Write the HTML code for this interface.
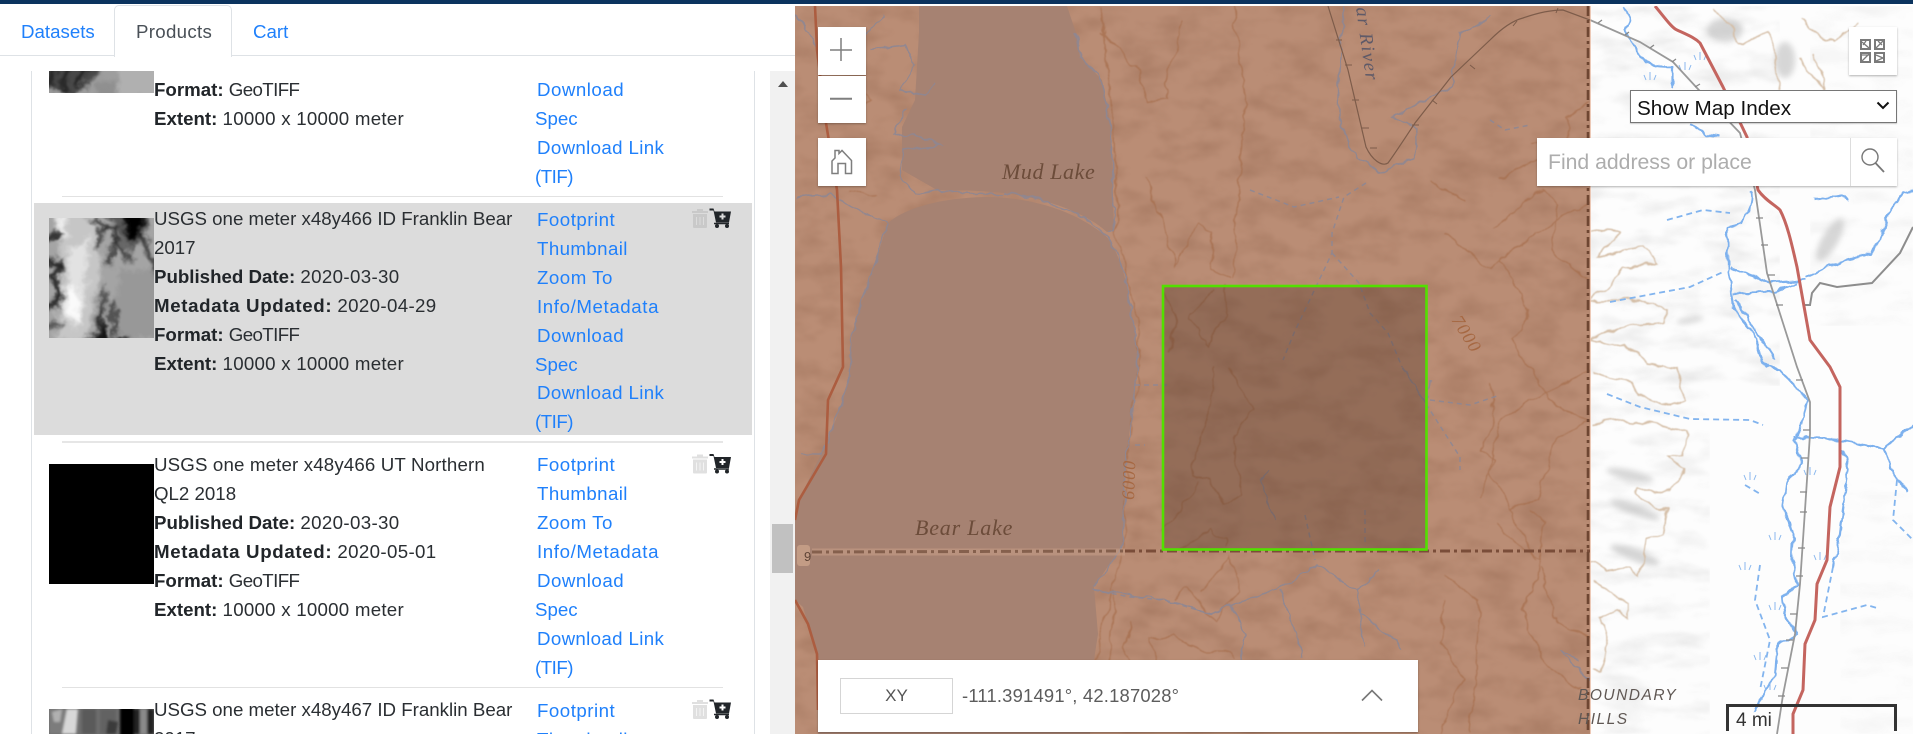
<!DOCTYPE html>
<html><head><meta charset="utf-8">
<style>
html,body{margin:0;padding:0;background:#fff}
#r{position:relative;width:1913px;height:734px;overflow:hidden;font-family:"Liberation Sans",sans-serif;font-size:18.7px;color:#2a2e32}
.a{position:absolute}
.t{position:absolute;white-space:nowrap;line-height:29px;height:29px}
.t b{color:#212529}
.l{color:#1f80fb}
.w{position:absolute;background:#fff;box-shadow:0 1px 2px rgba(0,0,0,.3)}
#list{position:absolute;left:0;top:71px;width:770px;height:663px;overflow:hidden}
.d{letter-spacing:.35px}.m{letter-spacing:.65px}.g{letter-spacing:-.6px}.v{letter-spacing:.25px}
.p1{letter-spacing:.5px}.p2{letter-spacing:.4px}.p3{letter-spacing:.5px}.p4{letter-spacing:.6px}.p5{letter-spacing:.5px}.p6{letter-spacing:.35px}.p7{letter-spacing:-.5px}
</style></head><body><div id="r">

<div class="a" style="left:0;top:0;width:1913px;height:3.5px;background:#0b335e"></div>

<!-- tabs -->
<div class="a" style="left:0;top:55px;width:795px;height:1px;background:#dee2e6"></div>
<div class="a" style="left:114px;top:5px;width:116px;height:51px;background:#fff;border:1px solid #dee2e6;border-bottom:0;border-radius:5px 5px 0 0"></div>
<div class="t l" style="left:21px;top:17px">Datasets</div>
<div class="t" style="left:136px;top:17px;color:#495057;letter-spacing:.3px">Products</div>
<div class="t l" style="left:253px;top:17px">Cart</div>

<!-- scrollbar -->
<div class="a" style="left:770px;top:71px;width:25px;height:663px;background:#f1f1f1"></div>
<div class="a" style="left:772px;top:524px;width:21px;height:49px;background:#c1c1c1"></div>
<div class="a" style="left:778px;top:81px;width:0;height:0;border-left:5.5px solid transparent;border-right:5.5px solid transparent;border-bottom:6px solid #505050"></div>

<!-- list -->
<div class="a" style="left:31px;top:71px;width:1px;height:663px;background:#dee2e6"></div>
<div class="a" style="left:754px;top:71px;width:1px;height:663px;background:#dee2e6"></div>
<div class="a" style="left:34px;top:203px;width:718px;height:232px;background:#dcdcdc"></div>
<div class="a" style="left:62px;top:196px;width:661px;height:1px;background:#e2e2e2"></div>
<div class="a" style="left:62px;top:441px;width:661px;height:2px;background:#e6e6e6"></div>
<div class="a" style="left:62px;top:687px;width:661px;height:1px;background:#e2e2e2"></div>

<svg class="a" style="left:0;top:0" width="800" height="734" viewBox="0 0 800 734">
<defs>
<filter id="b1" x="-20%" y="-20%" width="140%" height="140%"><feGaussianBlur stdDeviation="1.2"/></filter>
<filter id="tg" x="-30%" y="-30%" width="160%" height="160%" color-interpolation-filters="sRGB">
<feGaussianBlur in="SourceGraphic" stdDeviation="2.2" result="bl"/>
<feTurbulence type="fractalNoise" baseFrequency=".07" numOctaves="4" seed="7" result="n"/>
<feDisplacementMap in="bl" in2="n" scale="16" xChannelSelector="R" yChannelSelector="G"/>
<feGaussianBlur stdDeviation=".5"/>
</filter>
<clipPath id="c1"><rect x="49" y="71" width="105" height="22"/></clipPath>
<clipPath id="c2"><rect x="49" y="218" width="105" height="120"/></clipPath>
<clipPath id="c4"><rect x="49" y="709" width="105" height="25"/></clipPath>
</defs>
<!-- row 1 thumb -->
<g clip-path="url(#c1)">
<rect x="49" y="71" width="105" height="22" fill="#9e9e9e"/>
<g filter="url(#tg)">
<path d="M40 60H108L92 80L72 96L55 90L40 96Z" fill="#484848"/>
<path d="M68 65L62 92M85 65L78 90M55 70L50 90" stroke="#181818" stroke-width="4" fill="none"/>
<rect x="118" y="60" width="50" height="40" fill="#b0b0b0"/>
<rect x="96" y="82" width="22" height="15" fill="#8f8f8f"/>
</g></g>
<!-- row 2 thumb -->
<g clip-path="url(#c2)">
<rect x="49" y="218" width="105" height="120" fill="#a2a2a2"/>
<g filter="url(#tg)">
<rect x="40" y="208" width="125" height="140" fill="#a4a4a4"/>
<path d="M60 215H100V270L88 340H58Z" fill="#c6c6c6"/>
<path d="M70 250L88 238L85 295L76 330L62 315Z" fill="#e2e2e2"/>
<path d="M66 285L80 290L78 322L68 318Z" fill="#fafafa"/>
<path d="M55 215H66V240H55Z" fill="#ececec"/>
<path d="M120 270H165V340H112Z" fill="#989898"/>
<path d="M100 205L150 205L145 240L128 250L120 232Z" fill="#5a5a5a"/>
<path d="M124 212H142L140 236L128 240Z" fill="#000"/>
<path d="M92 218L118 230L108 268M104 222L96 250M140 230L158 275M118 238L130 262" stroke="#222" stroke-width="4" fill="none"/>
<path d="M40 262L60 262L54 280L60 298L44 310M46 240L60 232" stroke="#1f1f1f" stroke-width="6" fill="none"/>
<path d="M95 345L104 305L108 345Z" fill="#111"/>
<path d="M85 338H125V350H85Z" fill="#151515"/>
<path d="M104 290L100 330M112 300L115 335" stroke="#2a2a2a" stroke-width="4" fill="none"/>
<path d="M40 330L60 324" stroke="#333" stroke-width="4"/>
</g></g>
<!-- row 3 thumb -->
<rect x="49" y="464" width="105" height="120" fill="#000"/>
<!-- row 4 thumb -->
<g clip-path="url(#c4)">
<rect x="49" y="709" width="105" height="25" fill="#6e6e6e"/>
<g filter="url(#b1)">
<rect x="49" y="709" width="20" height="25" fill="#7c7c7c"/>
<path d="M52 712L62 709L60 722L54 722Z" fill="#b0b0b0"/>
<path d="M67 709L78 709L76 734L62 734Z" fill="#d8d8d8"/>
<rect x="82" y="709" width="14" height="25" fill="#5a5a5a"/>
<rect x="100" y="709" width="16" height="25" fill="#626262"/>
<path d="M108 720L118 722L116 734H106Z" fill="#3a3a3a"/>
<rect x="120" y="705" width="14" height="32" fill="#000"/>
<rect x="134" y="709" width="6" height="25" fill="#222"/>
<rect x="140" y="709" width="7" height="25" fill="#8a8a8a"/>
<rect x="147" y="709" width="7" height="25" fill="#222"/>
</g>
</g>
<!-- trash + cart icons -->
<g>
<g fill="#c9c9c9" opacity=".95">
<path d="M692 211h16v2h-16zM697 209h6v2h-6z"/>
<path d="M693 214h14v13a1 1 0 0 1-1 1h-12a1 1 0 0 1-1-1z"/>
</g>
<g stroke="#dcdcdc" stroke-width="1"><path d="M696.500 217v8M700 217v8M703.500 217v8"/></g>
<path d="M709.500 208.500h4l1 3h16.500l-2 11h-13l-2.500-12h-4z" fill="#212529"/>
<circle cx="717" cy="226" r="2" fill="#212529"/><circle cx="727" cy="226" r="2" fill="#212529"/>
<path d="M714 223.500h15" stroke="#212529" stroke-width="1.500"/>
<path d="M719.500 216.500h6M722.500 213.500v6" stroke="#dcdcdc" stroke-width="2"/>
</g>
<g transform="translate(0 245.500)">
<g fill="#e0e0e0"><path d="M692 211h16v2h-16zM697 209h6v2h-6z"/><path d="M693 214h14v13a1 1 0 0 1-1 1h-12a1 1 0 0 1-1-1z"/></g>
<g stroke="#f4f4f4"><path d="M696.500 217v8M700 217v8M703.500 217v8"/></g>
<path d="M709.500 208.500h4l1 3h16.500l-2 11h-13l-2.500-12h-4z" fill="#212529"/>
<circle cx="717" cy="226" r="2" fill="#212529"/><circle cx="727" cy="226" r="2" fill="#212529"/>
<path d="M714 223.500h15" stroke="#212529" stroke-width="1.500"/>
<path d="M719.500 216.500h6M722.500 213.500v6" stroke="#fff" stroke-width="2"/>
</g>
<g transform="translate(0 491)">
<g fill="#e0e0e0"><path d="M692 211h16v2h-16zM697 209h6v2h-6z"/><path d="M693 214h14v13a1 1 0 0 1-1 1h-12a1 1 0 0 1-1-1z"/></g>
<g stroke="#f4f4f4"><path d="M696.500 217v8M700 217v8M703.500 217v8"/></g>
<path d="M709.500 208.500h4l1 3h16.500l-2 11h-13l-2.500-12h-4z" fill="#212529"/>
<circle cx="717" cy="226" r="2" fill="#212529"/><circle cx="727" cy="226" r="2" fill="#212529"/>
<path d="M714 223.500h15" stroke="#212529" stroke-width="1.500"/>
<path d="M719.500 216.500h6M722.500 213.500v6" stroke="#fff" stroke-width="2"/>
</g>
</svg>

<!-- row 1 -->
<div id="list">
<div class="t" style="left:154px;top:3.500px"><b>Format:</b> <span class="g">GeoTIFF</span></div>
<div class="t" style="left:154px;top:32.500px"><b>Extent:</b> <span class="v">10000 x 10000 meter</span></div>
<div class="t l p5" style="left:537px;top:3.500px">Download</div>
<div class="t l" style="left:535px;top:32.500px">Spec</div>
<div class="t l p6" style="left:537px;top:61.500px">Download Link</div>
<div class="t l p7" style="left:535px;top:90.500px">(TIF)</div>
<!-- row 2 -->
<div class="t" style="left:154px;top:133px">USGS one meter x48y466 ID Franklin Bear</div>
<div class="t" style="left:154px;top:162px">2017</div>
<div class="t" style="left:154px;top:191px"><b>Published Date:</b> <span class="d">2020-03-30</span></div>
<div class="t" style="left:154px;top:220px"><b class="m">Metadata Updated:</b> <span class="d">2020-04-29</span></div>
<div class="t" style="left:154px;top:249px"><b>Format:</b> <span class="g">GeoTIFF</span></div>
<div class="t" style="left:154px;top:278px"><b>Extent:</b> <span class="v">10000 x 10000 meter</span></div>
<div class="t l p1" style="left:537px;top:134px">Footprint</div>
<div class="t l p2" style="left:537px;top:163px">Thumbnail</div>
<div class="t l p3" style="left:537px;top:192px">Zoom To</div>
<div class="t l p4" style="left:537px;top:221px">Info/Metadata</div>
<div class="t l p5" style="left:537px;top:250px">Download</div>
<div class="t l" style="left:535px;top:279px">Spec</div>
<div class="t l p6" style="left:537px;top:307px">Download Link</div>
<div class="t l p7" style="left:535px;top:336px">(TIF)</div>
<!-- row 3 -->
<div class="t" style="left:154px;top:379px;letter-spacing:.15px">USGS one meter x48y466 UT Northern</div>
<div class="t" style="left:154px;top:408px">QL2 2018</div>
<div class="t" style="left:154px;top:437px"><b>Published Date:</b> <span class="d">2020-03-30</span></div>
<div class="t" style="left:154px;top:466px"><b class="m">Metadata Updated:</b> <span class="d">2020-05-01</span></div>
<div class="t" style="left:154px;top:495px"><b>Format:</b> <span class="g">GeoTIFF</span></div>
<div class="t" style="left:154px;top:524px"><b>Extent:</b> <span class="v">10000 x 10000 meter</span></div>
<div class="t l p1" style="left:537px;top:379px">Footprint</div>
<div class="t l p2" style="left:537px;top:408px">Thumbnail</div>
<div class="t l p3" style="left:537px;top:437px">Zoom To</div>
<div class="t l p4" style="left:537px;top:466px">Info/Metadata</div>
<div class="t l p5" style="left:537px;top:495px">Download</div>
<div class="t l" style="left:535px;top:524px">Spec</div>
<div class="t l p6" style="left:537px;top:553px">Download Link</div>
<div class="t l p7" style="left:535px;top:582px">(TIF)</div>
<!-- row 4 -->
<div class="t" style="left:154px;top:624px">USGS one meter x48y467 ID Franklin Bear</div>
<div class="t" style="left:154px;top:653px">2017</div>
<div class="t l p1" style="left:537px;top:625px">Footprint</div>
<div class="t l p2" style="left:537px;top:654px">Thumbnail</div>
</div>

<!-- map -->
<svg class="a" style="left:795px;top:6px" width="1118" height="728" viewBox="795 6 1118 728">
<defs>
<filter id="s" x="-30%" y="-30%" width="160%" height="160%"><feGaussianBlur stdDeviation="3"/></filter>
<filter id="w1" x="-5%" y="-5%" width="110%" height="110%" color-interpolation-filters="sRGB">
<feTurbulence type="fractalNoise" baseFrequency=".045" numOctaves="3" seed="4" result="n"/>
<feDisplacementMap in="SourceGraphic" in2="n" scale="12" xChannelSelector="R" yChannelSelector="G"/>
<feGaussianBlur stdDeviation=".45"/>
</filter>
<filter id="w2" x="-5%" y="-5%" width="110%" height="110%" color-interpolation-filters="sRGB">
<feTurbulence type="fractalNoise" baseFrequency=".09" numOctaves="2" seed="9" result="n"/>
<feDisplacementMap in="SourceGraphic" in2="n" scale="7" xChannelSelector="R" yChannelSelector="G"/>
<feGaussianBlur stdDeviation=".3"/>
</filter>
<filter id="tb" x="0" y="0" width="100%" height="100%" color-interpolation-filters="sRGB">
<feTurbulence type="fractalNoise" baseFrequency=".025 .05" numOctaves="4" seed="3"/>
<feColorMatrix values="0 0 0 0 .42  0 0 0 0 .25  0 0 0 0 .16  1.5 0 0 0 -.62"/>
<feGaussianBlur stdDeviation="1"/>
</filter>
<filter id="tw" x="0" y="0" width="100%" height="100%" color-interpolation-filters="sRGB">
<feTurbulence type="fractalNoise" baseFrequency=".02 .06" numOctaves="4" seed="11"/>
<feColorMatrix values="0 0 0 0 .45  0 0 0 0 .45  0 0 0 0 .45  1.6 0 0 0 -.72"/>
<feGaussianBlur stdDeviation="1"/>
</filter>
<clipPath id="br"><rect x="795" y="6" width="795" height="728"/></clipPath>
<clipPath id="wh"><rect x="1590" y="6" width="323" height="728"/></clipPath>
</defs>

<!-- white base map -->
<rect x="1590" y="6" width="323" height="728" fill="#fdfdfd"/>
<g clip-path="url(#wh)">
<rect x="1590" y="6" width="190" height="380" filter="url(#tw)" opacity=".2"/>
<rect x="1590" y="386" width="120" height="348" filter="url(#tw)" opacity=".18"/>
<rect x="1810" y="6" width="103" height="320" filter="url(#tw)" opacity=".1"/>
<rect x="1840" y="480" width="73" height="254" filter="url(#tw)" opacity=".07"/>
<g filter="url(#s)" fill="#bdbdbd" opacity=".6">
<ellipse cx="1725" cy="30" rx="18" ry="12"/>
<ellipse cx="1785" cy="60" rx="10" ry="18"/>
<ellipse cx="1830" cy="240" rx="8" ry="24" transform="rotate(30 1830 240)"/>
<ellipse cx="1630" cy="475" rx="24" ry="5" transform="rotate(12 1630 475)"/>
<ellipse cx="1635" cy="510" rx="26" ry="5" transform="rotate(20 1635 510)"/>
<ellipse cx="1635" cy="555" rx="26" ry="6" transform="rotate(20 1635 555)"/>
<ellipse cx="1690" cy="320" rx="14" ry="3" transform="rotate(-10 1690 320)"/>
</g>
<g filter="url(#w1)" fill="none" stroke="#d5bfa8" stroke-width="1.500">
<path d="M1592 230L1617 233L1597 257L1643 247L1657 263L1623 267L1607 287L1592 300"/>
<path d="M1592 302L1640 300L1667 310L1667 323L1623 327L1592 337"/>
<path d="M1592 338L1623 347L1650 363L1677 367L1683 400L1670 405L1637 395L1625 380L1603 375L1592 372"/>
<path d="M1592 424L1623 420L1657 425L1685 432L1685 454L1668 455L1683 470L1672 490L1638 490L1638 497L1667 510L1663 534L1647 540L1640 577L1630 567L1607 570L1592 564"/>
<path d="M1592 580L1613 593L1628 604L1628 622L1617 610L1600 617L1607 644L1602 672L1592 669"/>
<path d="M1717 6L1740 43L1770 33L1777 80L1780 90"/>
<path d="M1803 20L1825 40L1837 43L1860 20M1800 60L1825 90L1815 55"/>
</g>
<!-- blue rivers -->
<g filter="url(#w2)" fill="none" stroke="#7db1ee" stroke-width="2.200" stroke-linejoin="round">
<path d="M1623 7Q1632 18 1628 25T1637 50Q1640 58 1647 63T1672 67L1672 88"/>
<path d="M1690 125Q1700 128 1706 135L1720 137"/>
<path d="M1750 190Q1755 205 1740 223L1727 227L1728 267L1733 307Q1745 325 1753 333L1767 367L1780 370L1807 400L1800 430L1795 442L1802 464L1787 480L1783 504L1793 534L1792 560L1797 584L1783 597L1785 617L1797 634L1778 644L1775 674L1760 700L1755 712"/>
<path d="M1807 277L1837 263L1873 253L1890 213L1903 192L1913 190"/>
<path d="M1730 267L1770 283L1807 280M1733 293L1773 292L1797 283"/>
<path d="M1795 437L1840 440L1883 449L1913 424M1883 449L1897 480L1908 492"/>
<path d="M1843 450L1848 470L1840 534L1833 567"/>
<path d="M1735 300L1775 360"/>
<path d="M1813 200L1840 195L1850 200"/>
</g>
<g fill="none" stroke="#82b4ee" stroke-width="1.800" stroke-dasharray="6 4">
<path d="M1607 394L1640 407L1690 419L1750 420L1763 425"/>
<path d="M1667 220L1703 210L1730 213"/>
<path d="M1610 302L1690 287L1723 272"/>
<path d="M1833 567L1823 617L1867 605L1877 608"/>
<path d="M1897 480L1893 520L1913 540"/>
<path d="M1760 565L1755 600L1770 640L1760 690"/>
<path d="M1745 485L1762 495"/>
</g>
<g fill="none" stroke="#8bb8ee" stroke-width="1">
<path d="M1700 60v-8m-4 8l-2-5m10 5l2-5M1685 70v-8m-4 8l-2-5m10 5l2-5M1650 80v-8m-4 8l-2-5m10 5l2-5"/>
<path d="M1750 480v-8m-4 8l-2-5m10 5l2-5M1775 540v-8m-4 8l-2-5m10 5l2-5M1810 475v-8m-4 8l-2-5m10 5l2-5"/>
<path d="M1775 610v-8m-4 8l-2-5m10 5l2-5M1820 560v-8m-4 8l-2-5m10 5l2-5M1745 570v-8m-4 8l-2-5m10 5l2-5"/>
<path d="M1760 660v-8m-4 8l-2-5m10 5l2-5M1770 690v-8m-4 8l-2-5m10 5l2-5"/>
</g>
<!-- gray -->
<path d="M1913 227L1900 253L1872 283L1837 287L1820 283L1812 293L1810 305L1805 305" fill="none" stroke="#8d8d8d" stroke-width="2"/>
<path d="M1590 20L1640 42L1673 62L1697 88L1740 133L1755 190L1767 273L1797 367L1810 402L1810 434L1805 510L1800 584L1795 634L1783 695L1777 734" fill="none" stroke="#999" stroke-width="1.800"/>
<path d="M1598 23l4-3M1625 35l4-3M1650 48l4-3M1672 62l4-3M1695 87l5-3M1756 218h7M1761 245h7M1768 275h7M1776 305h7M1796 380h7M1803 430h7M1801 458h7M1800 492h7M1800 512h7M1798 548h7M1796 576h7M1790 614h7M1786 640h7M1781 668h7M1778 696h7" stroke="#888" stroke-width="1.300" fill="none"/>
<!-- red road -->
<path d="M1655 6C1665 18 1672 28 1677 30C1690 36 1695 38 1700 43L1723 87L1747 137L1758 190C1765 200 1775 205 1780 210C1788 225 1793 250 1797 267L1810 340L1830 367L1840 387L1840 467L1830 507L1827 560L1817 584L1815 620L1805 644L1803 690L1793 714L1793 734" fill="none" stroke="#c4655f" stroke-width="3" stroke-linejoin="round"/>
</g>

<!-- brown map -->
<rect x="795" y="6" width="795" height="728" fill="#ba8d75"/>
<g clip-path="url(#br)">
<rect x="795" y="6" width="795" height="728" filter="url(#tb)" opacity=".28"/>
<!-- lake -->
<path d="M919 6H1067L1076 33L1080 57L1102 80L1111 127L1114 230L1107 232C1085 212 1045 198 1004 193C975 190 950 190 937 190L902 170L902 127L915 100L919 33Z" fill="#a68272"/>
<path d="M888 223C905 208 940 198 985 197C1030 197 1075 210 1107 237C1120 255 1127 280 1131 310C1136 335 1138 350 1138 367L1125 467L1123 544L1094 587L1098 634L1094 660L1090 734H818L817 654L803 607L795 600V520L799 500L821 454L837 417L848 384L850 367L852 333L866 290Z" fill="#a68272"/>
<!-- contours -->
<g filter="url(#w1)" fill="none" stroke="#a56c4a" stroke-width="1.300" opacity=".7">
<path d="M1102 6L1114 127L1116 233L1138 320L1140 367L1134 400L1127 460L1123 544L1114 584L1094 660"/>
<path d="M1234 6L1245 100L1241 167L1232 280"/>
<path d="M1183 20L1178 43L1165 83L1169 100L1147 103L1134 67L1102 33"/>
<path d="M1198 223L1174 267L1169 233L1143 177M1212 230L1210 270L1230 280M1198 223L1212 230"/>
<path d="M1212 367L1210 414L1194 460L1190 474L1210 477L1223 502L1241 494L1232 440L1252 407L1230 367"/>
<path d="M1214 287L1190 317L1205 343L1227 317L1224 287"/>
<path d="M1162 292L1178 320L1170 350M1162 530L1190 500L1198 480"/>
<path d="M1180 550L1210 530L1225 540L1225 548"/>
<path d="M1200 590L1230 560L1240 590L1215 620L1190 590L1175 600"/>
<path d="M1110 660L1115 590M1150 680L1125 650L1130 620L1128 640"/>
<path d="M1155 660L1150 640L1175 635L1200 650L1225 650L1235 660"/>
<path d="M1445 234L1490 270L1510 250L1590 200"/>
<path d="M1430 180L1465 200M1500 180L1555 150L1590 180"/>
<path d="M1530 140L1590 150M1495 230L1540 190L1560 205L1550 250L1590 280"/>
<path d="M1500 260L1530 310L1515 340L1550 400L1590 420M1530 510L1545 525L1535 590L1520 610L1550 670L1580 690"/>
<path d="M1490 385L1495 420L1480 450L1495 460L1480 500M1495 520L1510 540L1540 560"/>
<path d="M1590 370L1570 380L1540 395L1500 420L1490 470L1535 560"/>
<path d="M1445 600L1440 640L1465 680L1440 734M1445 575L1480 600L1470 734"/>
<path d="M1590 420L1550 445L1540 500L1510 510"/>
<path d="M1590 100L1565 120L1570 140"/>
<path d="M1540 570L1555 620L1590 640"/>
<path d="M840 80L870 100L855 120M850 190L880 195"/>
</g>
<!-- water lines -->
<g filter="url(#w2)" fill="none" stroke="#8e8793" stroke-width="1.500" opacity=".9">
<path d="M795 12L815 45L830 60L860 40L885 15M870 50L905 45L915 65L900 90L925 95L935 82M905 110L895 135L915 135L940 145L905 150L900 175L915 195L937 190L1004 195"/>
<path d="M795 198L830 195L850 205L870 215L888 223"/>
<path d="M888 223L866 290L852 333L850 367L848 384L837 417L821 454L800 454"/>
<path d="M1076 33L1080 57L1102 80L1111 127L1114 230L1107 232M1004 193C1045 198 1085 212 1107 237C1120 255 1127 280 1131 310C1136 335 1138 350 1138 367L1125 467L1123 544L1094 587"/>
<path d="M1344 6L1339 80L1339 117Q1345 135 1352 150L1379 173L1415 157L1417 127L1393 117L1424 100L1451 87L1460 33L1490 17"/>
<path d="M1094 590L1165 600L1210 614L1281 587L1317 564L1357 590L1379 570M1357 590L1364 647M1281 590L1303 657M1230 605L1245 634L1240 660"/>
<path d="M1357 610L1395 640L1402 648"/>
<path d="M1402 367L1426 404L1430 380M1270 470L1260 480L1275 520"/>
<path d="M1580 660L1560 650L1590 680"/>
</g>
<g fill="none" stroke="#8e8793" stroke-width="1.500" stroke-dasharray="5 4" opacity=".9">
<path d="M1366 183L1344 197L1332 233L1332 253L1294 333L1283 360"/>
<path d="M1332 253L1359 283L1370 313L1388 333L1402 367"/>
<path d="M1426 404L1460 457L1460 470"/>
<path d="M1250 190L1294 207L1339 197"/>
<path d="M1094 590L1130 597L1165 600L1210 614"/>
<path d="M1430 400L1470 405L1500 395"/>
<path d="M1305 515L1315 560M1365 510L1365 545"/>
<path d="M1135 385L1170 385M1135 445L1145 445"/>
<path d="M1490 120L1505 130L1530 125"/>
</g>
<!-- road -->
<path d="M815 6L817 50L826 123L837 190L841 267L843 367L828 400L826 454L799 500L795 520M795 600L808 624L817 654L818 710" fill="none" stroke="#ac5d40" stroke-width="2.600" stroke-linejoin="round"/>
<path d="M1328 6L1348 70L1366 147C1372 160 1382 167 1388 163C1396 152 1405 138 1415 123L1451 77L1490 40C1505 25 1515 20 1523 18C1540 12 1552 10 1563 10L1590 20" fill="none" stroke="#7d5c4a" stroke-width="1.200"/>
<path d="M1336 40h6M1345 65h7M1352 100h7M1362 128h7M1370 148h7M1412 125h7M1432 100l5 4M1470 65l5 4M1513 26l4-5M1556 13l2-5" stroke="#7d5c4a" stroke-width="1" fill="none"/>
<!-- boundary -->
<path d="M812 552H1125" stroke="#c9a088" stroke-width="7" opacity=".55"/>
<path d="M812 552L1125 551" stroke="#85604d" stroke-width="3" stroke-dasharray="10 4 3 4" />
<path d="M1125 551L1590 551" stroke="#7a4d39" stroke-width="3" stroke-dasharray="10 4 3 4"/>
<rect x="797" y="545" width="13" height="21" rx="3" fill="#c39c85"/>
<!-- box -->
<rect x="1162" y="285" width="265" height="265" fill="#4f3526" fill-opacity=".36"/>
<rect x="1163" y="286" width="263.500" height="263.500" fill="none" stroke="#52e000" stroke-width="2.600"/>
<!-- labels -->
<text x="1002" y="179" font-family="Liberation Serif,serif" font-style="italic" font-size="22" letter-spacing=".6" fill="#6c4c3a">Mud Lake</text>
<text x="915" y="535" font-family="Liberation Serif,serif" font-style="italic" font-size="22" letter-spacing=".8" fill="#6c4c3a">Bear Lake</text>
<text transform="translate(1134 500) rotate(-88)" font-family="Liberation Serif,serif" font-style="italic" font-size="18" fill="#a66842" letter-spacing="1">6000</text>
<text transform="translate(1451 320) rotate(58)" font-family="Liberation Serif,serif" font-style="italic" font-size="18" fill="#a66842" letter-spacing="1">7000</text>
<text transform="translate(1356 8) rotate(82)" font-family="Liberation Serif,serif" font-style="italic" font-size="19" fill="#5f5a68" letter-spacing="1.500">ar River</text>
<text x="804" y="561" font-family="Liberation Sans,sans-serif" font-size="13" fill="#5f4436">9</text>
</g>
<path d="M1588 6V734" stroke="#6e4632" stroke-width="2.600" stroke-dasharray="10 4 3 4"/>
<path d="M1590.500 6V734" stroke="#e6b49a" stroke-width="1" opacity=".7"/>
<text x="1578" y="700" font-family="Liberation Sans,sans-serif" font-style="italic" font-size="15.500" letter-spacing="1.500" fill="#5f5753">BOUNDARY</text>
<text x="1578" y="724" font-family="Liberation Sans,sans-serif" font-style="italic" font-size="15.500" letter-spacing="1.500" fill="#5f5753">HILLS</text>
</svg>

<!-- map controls -->
<div class="w" style="left:818px;top:27px;width:48px;height:48px"></div>
<div class="w" style="left:818px;top:76px;width:48px;height:47px"></div>
<div class="w" style="left:818px;top:138px;width:48px;height:48px"></div>
<div class="w" style="left:1849px;top:27px;width:48px;height:48px"></div>
<div class="w" style="left:1537px;top:138px;width:360px;height:48px"></div>
<div class="a" style="left:1850px;top:138px;width:1px;height:48px;background:#ddd"></div>
<div class="a" style="left:1630px;top:90px;width:265px;height:31px;background:#fff;border:1px solid #767676;box-shadow:0 1px 1px rgba(0,0,0,.2)"></div>
<div class="t" style="left:1637px;top:94px;font-size:20.700px;color:#111">Show Map Index</div>
<div class="t" style="left:1548px;top:148px;font-size:21.200px;color:#adadad">Find address or place</div>
<div class="w" style="left:818px;top:660px;width:600px;height:72px"></div>
<div class="a" style="left:840px;top:678px;width:111px;height:34px;border:1px solid #d5d5d5;background:#fff"></div>
<div class="t" style="left:840px;top:681px;width:113px;text-align:center;font-size:17px;color:#555">XY</div>
<div class="t" style="left:962px;top:681px;font-size:18.400px;color:#5c5c5c;letter-spacing:.2px">-111.391491°, 42.187028°</div>

<svg class="a" style="left:0;top:0" width="1913" height="734" viewBox="0 0 1913 734" fill="none">
<path d="M830 50H852M841 38V61" stroke="#7f7f7f" stroke-width="1.500"/>
<path d="M830 98.700H852" stroke="#7f7f7f" stroke-width="2"/>
<path d="M832 173.500V161L835 158V150.500H839V153.500L842 150.500L851.500 160.500V173.500H845.500V163.500H838V173.500Z" stroke="#7e7e7e" stroke-width="1.500"/>
<g stroke="#7a7a7a" stroke-width="2"><rect x="1861" y="40" width="9" height="9"/><rect x="1875" y="40" width="9" height="9"/><rect x="1861" y="53" width="9" height="9"/><rect x="1875" y="53" width="9" height="9"/></g>
<g stroke="#7a7a7a" stroke-width="1.300"><path d="M1862 42l7 6M1866 41l-3 4M1876 48l7-7M1878 41l4 4M1862 61l7-7M1862 55h7M1876 55l7 3l-7 3"/></g>
<path d="M1877.500 102.500l5.500 5.500l5.500-5.500" stroke="#111" stroke-width="2"/>
<circle cx="1870" cy="157" r="8" stroke="#777" stroke-width="1.400"/>
<path d="M1875.500 163L1884 172" stroke="#777" stroke-width="1.800"/>
<path d="M1362 700.500L1372 690.500L1382 700.500" stroke="#777" stroke-width="1.600"/>
<path d="M1727.500 731V705.500H1895.500V731" stroke="#333" stroke-width="3"/>
</svg>
<div class="t" style="left:1736px;top:705.500px;font-size:19px;color:#333">4 mi</div>
</div></body></html>
